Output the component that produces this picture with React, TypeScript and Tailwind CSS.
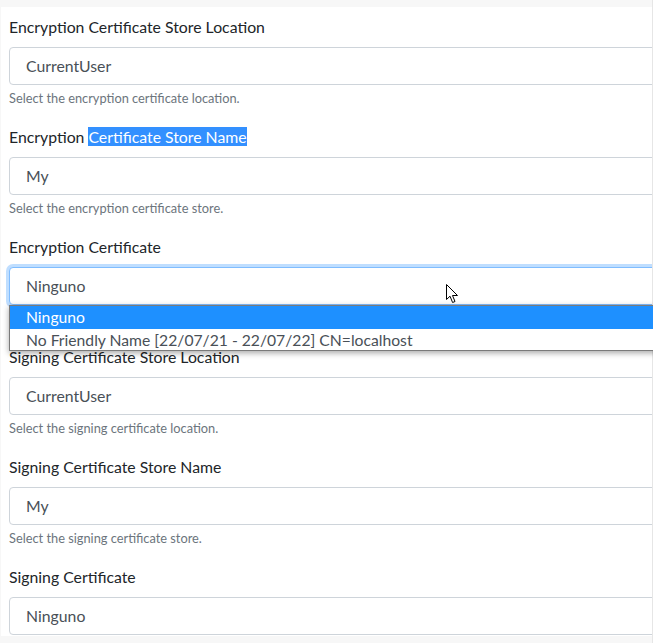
import React from 'react'

type Field = {
  label: React.ReactNode
  value: string
  help?: string
  focused?: boolean
}

const fields: Field[] = [
  { label: 'Encryption Certificate Store Location', value: 'CurrentUser', help: 'Select the encryption certificate location.' },
  {
    label: (
      <>
        Encryption <span className="bg-[#3390ff] text-white">Certificate Store Name</span>
      </>
    ),
    value: 'My',
    help: 'Select the encryption certificate store.',
  },
  { label: 'Encryption Certificate', value: 'Ninguno', focused: true },
  { label: 'Signing Certificate Store Location', value: 'CurrentUser', help: 'Select the signing certificate location.' },
  { label: 'Signing Certificate Store Name', value: 'My', help: 'Select the signing certificate store.' },
  { label: 'Signing Certificate', value: 'Ninguno' },
]

function Cursor() {
  return (
    <svg className="absolute left-[446px] top-[284px] z-30" width="13" height="20" viewBox="0 0 13 20">
      <path d="M0.5 0.5 L0.5 15.5 L4 12.2 L6.6 18.5 L9 17.5 L6.5 11.5 L11.5 11.5 Z" fill="#fff" stroke="#000" strokeWidth="1" strokeLinejoin="miter" />
    </svg>
  )
}

function Dropdown() {
  return (
    <div className="absolute left-0 top-[38px] z-20 w-[700px] border border-[#7a7a7a] bg-white text-[15.7px] leading-[22px] text-[#212529] shadow-[0_2px_6px_rgba(0,0,0,0.35)]">
      <div className="h-[23px] bg-[#1e90ff] pl-[16px] text-white">Ninguno</div>
      <div className="h-[21px] pl-[16px] text-[#495057]">No Friendly Name [22/07/21 - 22/07/22] CN=localhost</div>
    </div>
  )
}

export default function App() {
  return (
    <div className="relative h-[643px] w-[653px] overflow-hidden bg-[#f7f7f7] font-['Lato','Noto_Sans',sans-serif]">
      <div className="ml-[1px] mt-[7px] h-[629px] bg-white pl-[8px] pt-[8px]">
        {fields.map((f, i) => (
          <div key={i} className="h-[110px]">
            <label className="mb-[8px] block text-[15.8px] leading-[24px] text-[#212529]">{f.label}</label>
            <div className="relative">
              <div
                className={`flex h-[38px] w-[700px] items-center rounded-[4px] border bg-white pl-[16px] text-[15.8px] text-[#495057] ${
                  f.focused
                    ? 'border-[#80bdff] shadow-[0_0_0_3px_rgba(0,123,255,0.25)]'
                    : 'border-[#ced4da]'
                }`}
              >
                {f.value}
              </div>
              {f.focused && <Dropdown />}
            </div>
            {f.help && <p className="mt-[4px] text-[12.8px] leading-[19px] text-[#6c757d]">{f.help}</p>}
          </div>
        ))}
      </div>
      <div className="absolute right-0 top-0 h-full w-[1px] bg-[#e6e6e6]" />
      <Cursor />
    </div>
  )
}
